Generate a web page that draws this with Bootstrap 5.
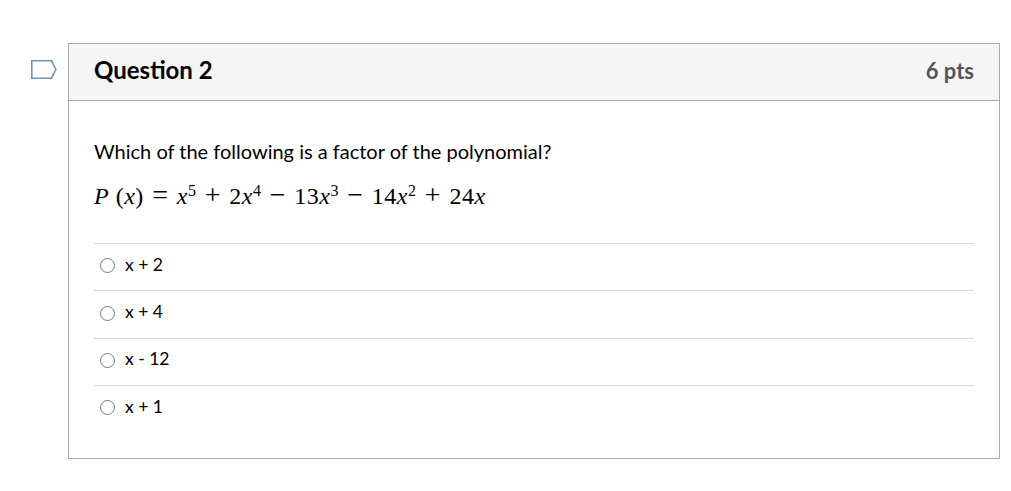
<!DOCTYPE html>
<html lang="en">
<head>
    <meta charset="UTF-8">
    <meta name="viewport" content="width=device-width, initial-scale=1.0">
    <title>Question 2</title>
    <link href="https://cdn.jsdelivr.net/npm/bootstrap@5.3.0/dist/css/bootstrap.min.css" rel="stylesheet">
    <style>
        body { font-family: Lato, "Liberation Sans", sans-serif; color: #000; background: #fff; }
        .quiz-wrap { padding: 43px 11px 0 0; }
        .flag-col { width: 68px; padding: 17px 0 0 31px; }
        .quiz-card { width: 932px; height: 416px; border: 1px solid #aaa; border-radius: 0; }
        .quiz-head { height: 57px; padding: 0 25px 3px; background: #f5f5f5; border-bottom: 1px solid #aaa; }
        .quiz-title { font-size: 24px; font-weight: 700; margin: 0; }
        .quiz-pts { font-size: 22px; font-weight: 700; color: #505558; }
        .quiz-body { padding: 37px 25px 0; }
        .quiz-text { font-size: 20px; line-height: 27px; margin: 0 0 16px; }
        .quiz-math { font-family: "Liberation Serif", serif; font-size: 24px; letter-spacing: 0.5px; line-height: 30px; height: 47px; white-space: nowrap; margin: 0; }
        .quiz-math sup { font-size: 16px; top: -0.5em; }
        .math-op { font-size: 28px; line-height: 1; margin: 0 1.8px; }
        .quiz-opts { margin-top: 15px; }
        .quiz-opts .quiz-opt { height: 47.4px; padding: 0 0 5px 6px; border: 0; border-top: 1px solid #ddd; font-size: 17.5px; color: #000; gap: 10px; }
        .quiz-opt .form-check-input { width: 15px; height: 15px; margin: 2px 0 0; border: 1.5px solid #777; background-color: #fff; flex: none; }
    </style>
</head>
<body>
    <div class="quiz-wrap d-flex">
        <div class="flag-col flex-shrink-0">
            <!-- question flag -->
            <svg width="26" height="20" viewBox="0 0 26 20" class="d-block" aria-hidden="true">
                <path d="M.8 .8H20.5L24.8 9.5L20.5 18.2H.8Z" fill="#fff" stroke="#6a97b5" stroke-width="1.6"/>
            </svg>
        </div>
        <div class="card quiz-card flex-shrink-0">
            <div class="quiz-head d-flex align-items-center justify-content-between">
                <h2 class="quiz-title">Question 2</h2>
                <span class="quiz-pts">6 pts</span>
            </div>
            <div class="quiz-body">
                <p class="quiz-text">Which of the following is a factor of the polynomial?</p>
                <p class="quiz-math"><i>P</i> (<i>x</i>) <span class="math-op">=</span> <i>x</i><sup>5</sup> <span class="math-op">+</span> 2<i>x</i><sup>4</sup> <span class="math-op">&minus;</span> 13<i>x</i><sup>3</sup> <span class="math-op">&minus;</span> 14<i>x</i><sup>2</sup> <span class="math-op">+</span> 24<i>x</i></p>
                <div class="list-group list-group-flush quiz-opts">
                    <label class="list-group-item quiz-opt d-flex align-items-center"><input class="form-check-input" type="radio" name="answer"><span>x + 2</span></label>
                    <label class="list-group-item quiz-opt d-flex align-items-center"><input class="form-check-input" type="radio" name="answer"><span>x + 4</span></label>
                    <label class="list-group-item quiz-opt d-flex align-items-center"><input class="form-check-input" type="radio" name="answer"><span>x - 12</span></label>
                    <label class="list-group-item quiz-opt d-flex align-items-center"><input class="form-check-input" type="radio" name="answer"><span>x + 1</span></label>
                </div>
            </div>
        </div>
    </div>
    <script src="https://cdn.jsdelivr.net/npm/bootstrap@5.3.0/dist/js/bootstrap.bundle.min.js"></script>
</body>
</html>
